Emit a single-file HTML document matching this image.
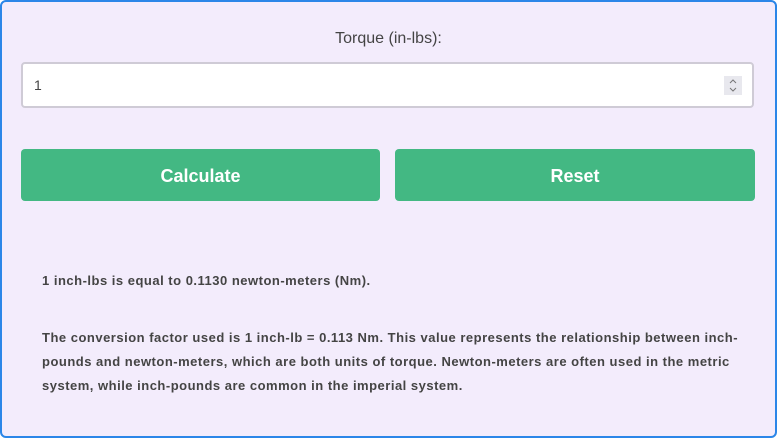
<!DOCTYPE html>
<html><head><style>
html,body{margin:0;padding:0;background:#fff;}
.box{position:absolute;left:0;top:0;width:773px;height:434px;border:2px solid #2b86e8;border-radius:6px;background:#f3ecfc;font-family:"Liberation Sans",sans-serif;}
.lbl{position:absolute;top:28px;left:0;width:773px;text-align:center;font-size:16px;color:#444;}
.inp{position:absolute;left:19px;top:60px;width:729px;height:42px;background:#fff;border:2px solid #cfcbd6;border-radius:4px;}
.inp span{position:absolute;left:11px;top:13px;font-size:14px;color:#444;}
.spin{position:absolute;right:10px;top:12px;width:18px;height:19px;background:#e8e8ee;}
.btn{position:absolute;top:147px;height:52px;background:#43b883;border-radius:4px;color:#fff;font-weight:bold;font-size:18px;text-align:center;line-height:54px;}
.t{position:absolute;left:40px;color:#444;font-weight:bold;font-size:13px;letter-spacing:0.5px;white-space:nowrap;}
</style></head><body>
<div class="box">
<div class="lbl">Torque (in-lbs):</div>
<div class="inp"><span>1</span><div class="spin"><svg width="18" height="19"><path d="M6 7l3-3 3 3M6 12l3 3 3-3" fill="none" stroke="#777" stroke-width="1"/></svg></div></div>
<div class="btn" style="left:19px;width:359px">Calculate</div>
<div class="btn" style="left:393px;width:360px">Reset</div>
<div class="t" style="top:271px">1 inch-lbs is equal to 0.1130 newton-meters (Nm).</div>
<div class="t" style="top:324px;line-height:24px">The conversion factor used is 1 inch-lb = 0.113 Nm. This value represents the relationship between inch-<br>pounds and newton-meters, which are both units of torque. Newton-meters are often used in the metric<br>system, while inch-pounds are common in the imperial system.</div>
</div>
</body></html>
